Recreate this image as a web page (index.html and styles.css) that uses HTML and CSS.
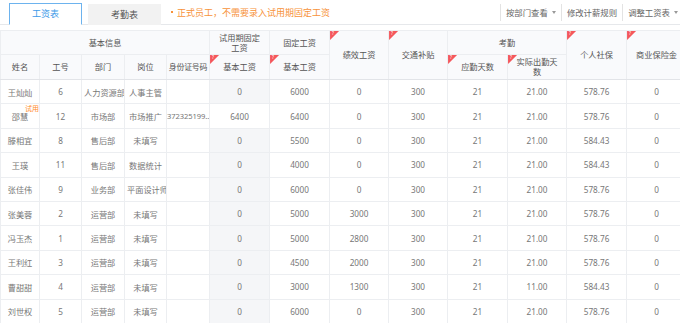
FILE: index.html
```html
<!DOCTYPE html>
<html lang="zh-CN">
<head>
    <meta charset="UTF-8">
    <title>工资表</title>
    <link rel="stylesheet" href="styles.css">
</head>
<body>
    <div class="topbar">
        <div class="tab active">工资表</div>
        <div class="tab">考勤表</div>
        <div class="notice"><span class="dot"></span>正式员工，不需要录入试用期固定工资</div>
        <div class="actions">
            <span class="action">按部门查看 <i class="caret"></i></span>
            <span class="action">修改计薪规则</span>
            <span class="action">调整工资表 <i class="caret"></i></span>
        </div>
    </div>

    <table class="salary">
        <colgroup>
            <col style="width:39px"><col style="width:42px"><col style="width:43px"><col style="width:42px"><col style="width:43px">
            <col style="width:60px"><col style="width:60px"><col style="width:59px"><col style="width:59px">
            <col style="width:60px"><col style="width:59px"><col style="width:60px"><col style="width:60px">
        </colgroup>
        <thead>
            <tr class="h1">
                <th colspan="5">基本信息</th>
                <th class="two">试用期固定<br>工资</th>
                <th>固定工资</th>
                <th rowspan="2"><span class="tip">?</span>绩效工资</th>
                <th rowspan="2"><span class="tip">?</span>交通补贴</th>
                <th colspan="2">考勤</th>
                <th rowspan="2"><span class="tip">?</span>个人社保</th>
                <th rowspan="2"><span class="tip">?</span>商业保险金</th>
            </tr>
            <tr class="h2">
                <th>姓名</th>
                <th>工号</th>
                <th>部门</th>
                <th>岗位</th>
                <th class="idcard">身份证号码</th>
                <th><span class="tip">?</span>基本工资</th>
                <th><span class="tip">?</span>基本工资</th>
                <th><span class="tip">?</span>应勤天数</th>
                <th class="two"><span class="tip">?</span>实际出勤天<br>数</th>
            </tr>
        </thead>
        <tbody>
            <tr><td>王灿灿</td><td>6</td><td>人力资源部</td><td>人事主管</td><td class="idcard"></td><td class="trial">0</td><td>6000</td><td>0</td><td>300</td><td>21</td><td>21.00</td><td>578.76</td><td>0</td></tr>
            <tr><td class="name"><span class="probation">试用</span>邵慧</td><td>12</td><td>市场部</td><td>市场推广</td><td class="idcard">372325199...</td><td>6400</td><td>6400</td><td>0</td><td>300</td><td>21</td><td>21.00</td><td>578.76</td><td>0</td></tr>
            <tr><td>滕相宜</td><td>8</td><td>售后部</td><td>未填写</td><td class="idcard"></td><td class="trial">0</td><td>5500</td><td>0</td><td>300</td><td>21</td><td>21.00</td><td>584.43</td><td>0</td></tr>
            <tr><td>王瑛</td><td>11</td><td>售后部</td><td>数据统计</td><td class="idcard"></td><td class="trial">0</td><td>4000</td><td>0</td><td>300</td><td>21</td><td>21.00</td><td>584.43</td><td>0</td></tr>
            <tr><td>张佳伟</td><td>9</td><td>业务部</td><td>平面设计师</td><td class="idcard"></td><td class="trial">0</td><td>6000</td><td>0</td><td>300</td><td>21</td><td>21.00</td><td>578.76</td><td>0</td></tr>
            <tr><td>张美蓉</td><td>2</td><td>运营部</td><td>未填写</td><td class="idcard"></td><td class="trial">0</td><td>5000</td><td>3000</td><td>300</td><td>21</td><td>21.00</td><td>578.76</td><td>0</td></tr>
            <tr><td>冯玉杰</td><td>1</td><td>运营部</td><td>未填写</td><td class="idcard"></td><td class="trial">0</td><td>5000</td><td>2800</td><td>300</td><td>21</td><td>21.00</td><td>578.76</td><td>0</td></tr>
            <tr><td>王利红</td><td>3</td><td>运营部</td><td>未填写</td><td class="idcard"></td><td class="trial">0</td><td>4500</td><td>2000</td><td>300</td><td>21</td><td>21.00</td><td>578.76</td><td>0</td></tr>
            <tr><td>曹甜甜</td><td>4</td><td>运营部</td><td>未填写</td><td class="idcard"></td><td class="trial">0</td><td>3000</td><td>1300</td><td>300</td><td>21</td><td>11.00</td><td>584.43</td><td>0</td></tr>
            <tr><td>刘世权</td><td>5</td><td>运营部</td><td>未填写</td><td class="idcard"></td><td class="trial">0</td><td>6000</td><td>0</td><td>300</td><td>21</td><td>21.00</td><td>578.76</td><td>0</td></tr>
        </tbody>
    </table>
</body>
</html>
```

FILE: styles.css
```css
/* Algemeen */
body {
    margin: 0;
    overflow: hidden;
    background-color: #fff;
    color: #666;
    font-family: "Noto Sans", "Noto Sans CJK SC", sans-serif;
    font-size: 8.2px;
}

/* Bovenbalk met tabs */
.topbar {
    display: flex;
    align-items: flex-end;
    height: 24px;
    padding-left: 9px;
    border-bottom: 1px solid #e6e8eb;
}
.tab {
    width: 73px;
    height: 21px;
    margin-right: 6px;
    margin-bottom: -1px;
    box-sizing: border-box;
    background-color: #f2f2f2;
    color: #555;
    font-size: 9px;
    line-height: 21px;
    text-align: center;
}
.tab.active {
    background-color: #fff;
    border: 1px solid #6db3ee;
    border-bottom-color: #fff;
    color: #3d9ae8;
    line-height: 19px;
    height: 22px;
}
.notice {
    display: flex;
    align-items: center;
    align-self: center;
    margin-left: 4px;
    color: #f7923a;
    font-size: 9px;
}
.notice .dot {
    width: 2px;
    height: 2px;
    margin-right: 4px;
    background-color: #f7923a;
}
.actions {
    display: flex;
    align-self: center;
    margin-left: auto;
    margin-right: -3px;
}
.action {
    display: flex;
    align-items: center;
    height: 17px;
    padding: 0 5px 0 5px;
    border-left: 1px solid #e3e3e3;
    color: #666;
    font-size: 8.4px;
}
.caret {
    width: 0;
    height: 0;
    margin-left: 4px;
    border-left: 2.5px solid transparent;
    border-right: 2.5px solid transparent;
    border-top: 3px solid #999;
}

/* Tabel */
.salary {
    margin-top: 5px;
    border-collapse: collapse;
    table-layout: fixed;
    width: 686px;
}
.salary th,
.salary td {
    border: 1px solid #eceef1;
    padding: 0 2px;
    text-align: center;
    font-weight: normal;
    white-space: nowrap;
    overflow: hidden;
}
.salary th {
    position: relative;
    background-color: #f9fafc;
    color: #555;
    line-height: 10px;
}
.salary .h1 th {
    height: 23px;
}
.salary .h2 th {
    height: 24px;
}
.salary thead tr:last-child th,
.salary thead th[rowspan] {
    border-bottom-color: #e2e4e8;
}
.salary td {
    height: 23.4px;
    color: #777;
}
.salary td.trial {
    background-color: #f5f6f8;
}
.salary .idcard {
    padding: 0;
    text-align: left;
    font-size: 7.6px;
    letter-spacing: -0.1px;
    text-overflow: clip;
}
.salary th.idcard {
    text-align: center;
    font-size: 7.9px;
    letter-spacing: -0.2px;
    overflow: visible;
}
.salary td.name {
    position: relative;
    overflow: visible;
}

/* Rode hoekjes met vraagteken */
.tip {
    position: absolute;
    top: 0;
    left: 0;
    width: 9px;
    height: 9px;
    background-color: #f4575c;
    clip-path: polygon(0 0, 100% 0, 0 100%);
    color: #fff;
    font-size: 4.5px;
    line-height: 5px;
    text-indent: -3px;
}

.probation {
    position: absolute;
    top: 1px;
    left: 24px;
    color: #ff8a1f;
    font-size: 7px;
    line-height: 8px;
}
```
